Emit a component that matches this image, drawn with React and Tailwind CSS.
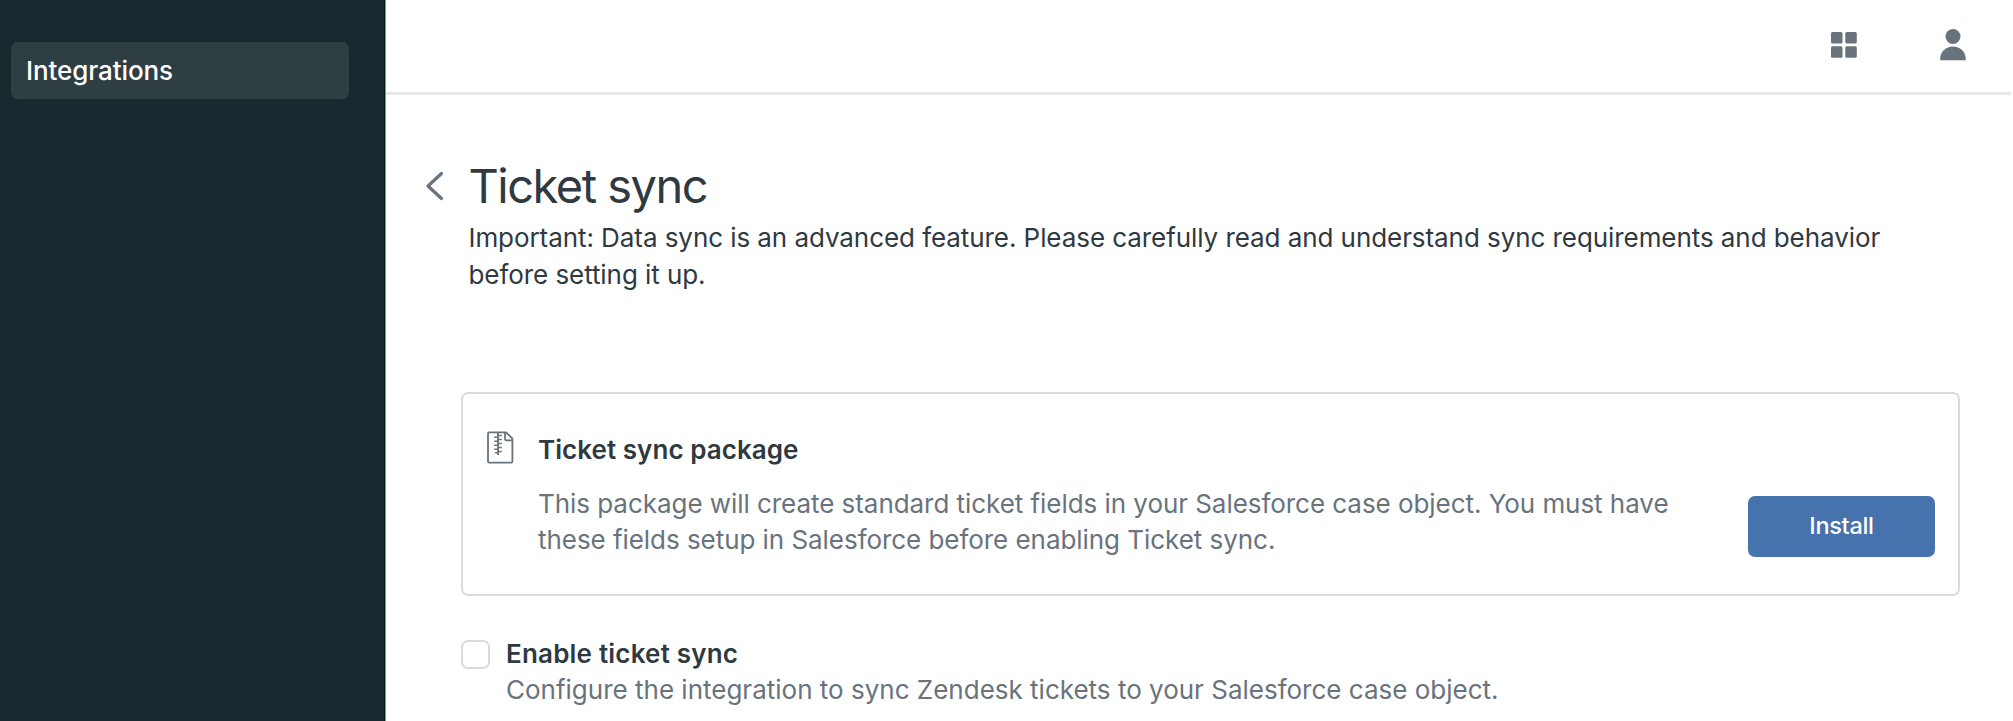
function GridIcon() {
  return (
    <svg width="26" height="26" viewBox="0 0 26 26" fill="#68737d">
      <rect x="0" y="0" width="11.5" height="11.5" rx="1.6" />
      <rect x="14.3" y="0" width="11.5" height="11.5" rx="1.6" />
      <rect x="0" y="14.3" width="11.5" height="11.5" rx="1.6" />
      <rect x="14.3" y="14.3" width="11.5" height="11.5" rx="1.6" />
    </svg>
  );
}

function UserIcon() {
  return (
    <svg width="26" height="32" viewBox="0 0 26 32" fill="#68737d">
      <circle cx="13" cy="7.5" r="7.5" />
      <path d="M0.2 30.400C0.2 22.400 6 17.500 13 17.500s12.8 4.900 12.8 12.900q0 .9-.9.9H1.100q-.9 0-.9-.9z" />
    </svg>
  );
}

function ZipFileIcon() {
  return (
    <svg width="27" height="33" viewBox="0 0 27 33" fill="none" stroke="#68737d" strokeWidth="1.8">
      <path d="M2.200 1.300h16.800l6.400 6.400v22.700q0 1.200-1.200 1.200H2.200Q1 31.600 1 30.400V2.500Q1 1.300 2.200 1.300z" />
      <path d="M18 1.300v6.800q0 1.200 1.200 1.200h6.400" />
      <path d="M11 1.300v22.700" />
      <path strokeWidth="1.500" d="M11 4.500h3.800M7.200 6.300H11M11 8.500h3.800M7.200 10.300H11M11 12.500h3.800M7.200 14.300H11M11 16.500h3.800M7.200 18.300H11M11 20.500h3.800M8 21.800h3" />
    </svg>
  );
}

export default function App() {
  return (
    <div className="flex h-[721px] w-full overflow-hidden bg-white font-['Inter','Liberation_Sans',sans-serif] text-[26px] text-[#2f3941]">
      <aside className="w-[386px] shrink-0 border-r border-[#8f9496] bg-[#17292e] pt-[42px] pl-[11px] shadow-[inset_-1px_0_0_#06171c]">
        <a className="flex h-[57px] w-[338px] items-center rounded-[7px] bg-[#2f3e43] pb-px pl-[15px] text-[26px] font-medium tracking-[-0.100px] text-white">
          Integrations
        </a>
      </aside>
      <div className="flex min-w-0 flex-1 flex-col">
        <header className="mr-[2px] flex h-[95px] shrink-0 items-center justify-end gap-[83px] border-b-[3px] border-[#e5e7e9] pr-[45px] pb-[3px]">
          <GridIcon />
          <UserIcon />
        </header>
        <main className="pt-[60px] pl-[75px]">
          <div className="flex">
            <button className="-ml-[36px] mt-[15px] mr-[24.500px] h-[32px] w-[19px]" aria-label="Back">
              <svg width="19" height="32" viewBox="0 0 19 32" fill="none" stroke="#68737d" strokeWidth="3.200" strokeLinecap="round" strokeLinejoin="round">
                <path d="M16.500 3.500L3 16l13.500 12.500" />
              </svg>
            </button>
            <div>
              <h1 className="h-16 pt-px text-[47px] leading-[60px] tracking-[-1.500px]">Ticket sync</h1>
              <p className="w-[1440px] leading-[37px] tracking-[-0.068px]">
                Important: Data sync is an advanced feature. Please carefully read and understand sync requirements and behavior
                <br />
                before setting it up.
              </p>
            </div>
          </div>
          <section className="mt-[99px] flex h-[204px] w-[1499px] rounded-[7px] border-2 border-[#d8dcde] pt-[37px] pr-[23px] pl-[24px]">
            <ZipFileIcon />
            <div className="ml-[24px] flex-1">
              <h2 className="mt-px mb-[18px] leading-9 font-semibold tracking-[0.050px]">Ticket sync package</h2>
              <p className="leading-[35.500px] tracking-[-0.050px] whitespace-nowrap text-[#68737d]">
                This package will create standard ticket fields in your Salesforce case object. You must have
                <br />
                these fields setup in Salesforce before enabling Ticket sync.
              </p>
            </div>
            <button className="mt-[65px] h-[61px] w-[187px] rounded-[7px] bg-[#4672ad] pb-[2px] text-[23.500px] font-medium tracking-[-0.300px] text-white">
              Install
            </button>
          </section>
          <label className="mt-[40px] flex">
            <span className="mt-[3.500px] size-[29px] shrink-0 rounded-[7px] border-2 border-[#d8dcde]" />
            <span className="ml-[16px]">
              <span className="block leading-9 font-semibold tracking-[0.200px]">Enable ticket sync</span>
              <span className="block leading-[35.500px] text-[#68737d]">
                Configure the integration to sync Zendesk tickets to your Salesforce case object.
              </span>
            </span>
          </label>
        </main>
      </div>
    </div>
  );
}
